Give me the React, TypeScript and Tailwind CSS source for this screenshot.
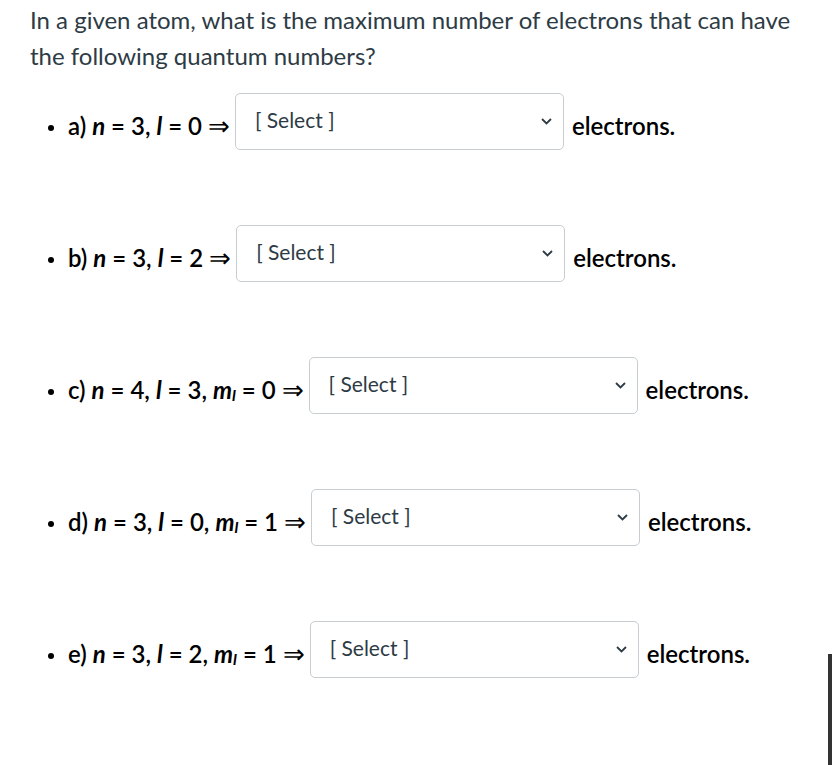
type Row = { key: string; parts: React.ReactNode };

const V = ({ children }: { children: React.ReactNode }) => <i className="font-bold">{children}</i>;

const ml = (
  <>
    <V>m</V>
    <sub className="text-[16px] italic font-bold relative top-[2px]">l</sub>
  </>
);

const rows: Row[] = [
  { key: "a", parts: <>a) <V>n</V> = 3, <V>l</V> = 0</> },
  { key: "b", parts: <>b) <V>n</V> = 3, <V>l</V> = 2</> },
  { key: "c", parts: <>c) <V>n</V> = 4, <V>l</V> = 3, {ml} = 0</> },
  { key: "d", parts: <>d) <V>n</V> = 3, <V>l</V> = 0, {ml} = 1</> },
  { key: "e", parts: <>e) <V>n</V> = 3, <V>l</V> = 2, {ml} = 1</> },
];

const SelectBox = () => (
  <div className="w-[329px] h-[57px] shrink-0 border border-[#c7cdd1] rounded-[5px] bg-white flex items-start justify-between pl-[19px] pr-[11px] pt-[12px]">
    <span className="text-[21px] font-normal text-[#2d3b45] leading-[28px]">[ Select ]</span>
    <svg width="11" height="7" viewBox="0 0 11 7" className="mt-[12px]">
      <path d="M1 1l4.5 4.5L10 1" fill="none" stroke="#2d3b45" strokeWidth="1.8" />
    </svg>
  </div>
);

export default function App() {
  return (
    <div className="relative w-[832px] h-[765px] bg-white text-[#000] overflow-hidden" style={{ fontFamily: "Lato, 'Noto Sans', sans-serif" }}>
      <div className="pl-[30px] pr-[20px] pt-[2px]">
        <p className="text-[24px] leading-[36px] text-[#2d3b45]">
          In a given atom, what is the maximum number of electrons that can have the following quantum numbers?
        </p>
        <ul className="mt-[19px] flex flex-col gap-[75px]">
          {rows.map((r) => (
            <li key={r.key} className="flex items-start text-[24px] font-semibold">
              <span className="mt-[32px] ml-[18px] mr-[14px] w-[6px] h-[6px] rounded-full bg-black shrink-0" />
              <span className="mt-[19px] leading-[28px] whitespace-nowrap">
                {r.parts}{" "}
                <span className="font-extralight text-[26px] leading-[20px]" style={{ fontFamily: "'DejaVu Sans', sans-serif" }}>⇒</span>
              </span>
              <span className="ml-[5px]"><SelectBox /></span>
              <span className="mt-[19px] ml-[8px] leading-[28px]">electrons.</span>
            </li>
          ))}
        </ul>
      </div>
      <div className="absolute right-0 top-[654px] w-[4px] h-[111px] bg-[#333]" />
    </div>
  );
}
